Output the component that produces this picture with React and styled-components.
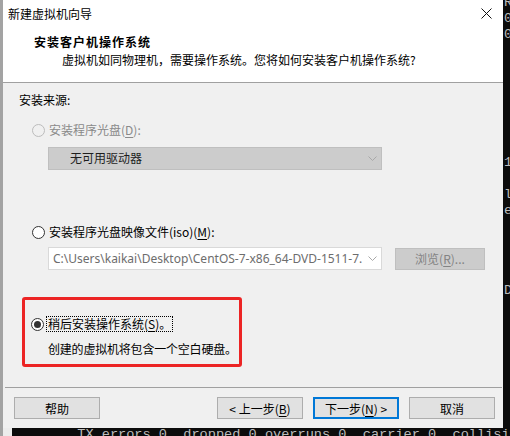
import React from 'react';
import styled, { createGlobalStyle, css } from 'styled-components';

const GlobalStyle = createGlobalStyle`
    html, body {
        margin: 0;
        padding: 0;
        background: #0c0c0c;
        overflow: hidden;
    }
    body {
        font-family: "Noto Sans CJK SC", "Noto Sans", sans-serif;
        font-size: 12px;
        color: #000000;
    }
`;

const Desktop = styled.div`
    position: relative;
    width: 510px;
    height: 436px;
    overflow: hidden;
    background: #0c0c0c;
`;

// strip of the window sitting behind the console
const BackStrip = styled.div`
    position: absolute;
    left: 0;
    top: 0;
    bottom: 0;
    width: 9px;
    background: #ececec;
    border-left: 3px solid #a3a3a3;
`;

const Console = styled.pre`
    position: absolute;
    left: ${p => p.$left}px;
    top: ${p => p.$top}px;
    margin: 0;
    font-family: "Liberation Mono", "DejaVu Sans Mono", monospace;
    font-size: 13.6px;
    line-height: 16px;
    color: #bdbdbd;
    white-space: pre;
`;

const Window = styled.div`
    position: absolute;
    left: 0;
    top: 0;
    width: 500px;
    height: 428px;
    display: flex;
    flex-direction: column;
    background: #f0f0f0;
    border-left: 3px solid #a3a3a3;
`;

const Top = styled.div`
    background: #ffffff;
    border-bottom: 1px solid #a0a0a0;
    height: 82px;
`;

const TitleBar = styled.div`
    height: 26px;
    display: flex;
    align-items: center;
    justify-content: space-between;
    padding: 0 10px 0 5px;
`;

const Title = styled.span`
    font-size: 12px;
    color: #000;
`;

const Close = styled.svg`
    width: 11px;
    height: 11px;
    margin-right: 1px;
`;

const Header = styled.div`
    padding: 7px 0 0 31px;
    line-height: 18px;
`;

const Heading = styled.div`
    font-weight: 700;
    letter-spacing: 1px;
`;

const Sub = styled.div`
    padding-left: 28px;
`;

const Body = styled.div`
    flex: 1;
    padding: 8px 0 0 16px;
    line-height: 18px;
`;

const Row = styled.div`
    display: flex;
    align-items: center;
    height: 18px;
    margin-top: ${p => p.$top || 0}px;
    padding-left: ${p => p.$indent || 0}px;
    color: ${p => (p.$disabled ? '#8a8a8a' : '#000')};
`;

const Radio = styled.span`
    box-sizing: border-box;
    width: 13px;
    height: 13px;
    border-radius: 50%;
    border: 1px solid ${p => (p.$disabled ? '#bcbcbc' : '#333333')};
    background: ${p => (p.$disabled ? '#f0f0f0' : '#ffffff')};
    display: flex;
    align-items: center;
    justify-content: center;
    margin-right: 2px;
    ${p => p.$checked && css`
        &::after {
            content: '';
            width: 7px;
            height: 7px;
            border-radius: 50%;
            background: #333333;
        }
    `}
`;

const Label = styled.span`
    padding: 0 1px;
    border: 1px dotted ${p => (p.$focus ? '#000' : 'transparent')};
    line-height: 14px;
`;

const Key = styled.u`
    text-underline-offset: 2px;
`;

const Field = styled.div`
    box-sizing: border-box;
    width: 334px;
    height: 23px;
    margin-left: 29px;
    display: flex;
    align-items: center;
    border: 1px solid ${p => (p.$filled ? '#d9d9d9' : '#bfbfbf')};
    background: ${p => (p.$filled ? '#ffffff' : '#cccccc')};
    color: ${p => (p.$filled ? '#6d6d6d' : '#1e1e1e')};
    padding-left: ${p => (p.$filled ? 4 : 21)}px;
    padding-right: 4px;
`;

const FieldText = styled.span`
    flex: 1;
    overflow: hidden;
    white-space: nowrap;
    font-family: "Noto Sans", "Noto Sans CJK SC", sans-serif;
    font-size: 12px;
`;

const Chevron = styled.svg`
    width: 9px;
    height: 5px;
    margin-left: 6px;
    flex: none;
`;

const PathRow = styled.div`
    display: flex;
    align-items: center;
    margin-top: 6px;
`;

const Browse = styled.div`
    box-sizing: border-box;
    width: 90px;
    height: 22px;
    margin-left: 13px;
    display: flex;
    align-items: center;
    justify-content: center;
    background: #cccccc;
    border: 1px solid #bfbfbf;
    color: #838383;
`;

const Callout = styled.div`
    box-sizing: border-box;
    width: 220px;
    height: 70px;
    margin: 27px 0 0 3px;
    padding: 15px 0 0 6px;
    border: 3px solid #ec2424;
    border-radius: 3px;
`;

const Note = styled.div`
    margin: 7px 0 0 17px;
    white-space: nowrap;
    letter-spacing: -0.2px;
`;

const Footer = styled.div`
    box-sizing: border-box;
    height: 41px;
    margin: 0 1px 0 2px;
    border-top: 1px solid #a0a0a0;
    display: flex;
    align-items: flex-start;
    padding: 9px 7px 0 9px;
    gap: 10px;
`;

const Button = styled.div`
    box-sizing: border-box;
    width: 86px;
    height: 22px;
    display: flex;
    align-items: center;
    justify-content: center;
    background: #e1e1e1;
    border: ${p => (p.$primary ? '2px solid #0078d7' : '1px solid #adadad')};
    color: #000;
    margin-left: ${p => p.$push ? 'auto' : '0'};
`;

// the console output peeking out to the right of the dialog
const edgeLines = [
    'R', '0', '0', '', '', '', '', '', '', '',
    '15', '', 'l', 'e', '', '', '', '', 'D',
];

const ChevronIcon = ({ color }) => (
    <Chevron viewBox="0 0 9 5">
        <path d="M0.5 0.5 L4.5 4.5 L8.5 0.5" fill="none" stroke={color} strokeWidth="1" />
    </Chevron>
);

export default function App() {
    return (
        <Desktop>
            <GlobalStyle />
            <BackStrip />
            <Console $left={504} $top={-5}>{edgeLines.join('\n')}</Console>
            <Console $left={12} $top={427}>{'        TX errors 0  dropped 0 overruns 0  carrier 0  collisions 0'}</Console>

            <Window>
                <Top>
                    <TitleBar>
                        <Title>新建虚拟机向导</Title>
                        <Close viewBox="0 0 11 11">
                            <path d="M0.5 0.5 L10.5 10.5 M10.5 0.5 L0.5 10.5" stroke="#111" strokeWidth="1" />
                        </Close>
                    </TitleBar>
                    <Header>
                        <Heading>安装客户机操作系统</Heading>
                        <Sub>虚拟机如同物理机，需要操作系统。您将如何安装客户机操作系统?</Sub>
                    </Header>
                </Top>

                <Body>
                    <div>安装来源:</div>

                    {/* installer disc */}
                    <Row $top={12} $indent={13} $disabled>
                        <Radio $disabled />
                        <Label>安装程序光盘(<Key>D</Key>):</Label>
                    </Row>
                    <Field style={{ marginTop: 8 }}>
                        <FieldText>无可用驱动器</FieldText>
                        <ChevronIcon color="#a8a8a8" />
                    </Field>

                    {/* iso image */}
                    <Row $top={53} $indent={13}>
                        <Radio />
                        <Label>安装程序光盘映像文件(iso)(<Key>M</Key>):</Label>
                    </Row>
                    <PathRow>
                        <Field $filled>
                            <FieldText>C:\Users\kaikai\Desktop\CentOS-7-x86_64-DVD-1511-7.2.iso</FieldText>
                            <ChevronIcon color="#a8a8a8" />
                        </Field>
                        <Browse>浏览(<Key>R</Key>)...</Browse>
                    </PathRow>

                    {/* install later */}
                    <Callout>
                        <Row>
                            <Radio $checked />
                            <Label $focus>稍后安装操作系统(<Key>S</Key>)。</Label>
                        </Row>
                        <Note>创建的虚拟机将包含一个空白硬盘。</Note>
                    </Callout>
                </Body>

                <Footer>
                    <Button>帮助</Button>
                    <Button $push>&lt; 上一步(<Key>B</Key>)</Button>
                    <Button $primary>下一步(<Key>N</Key>) &gt;</Button>
                    <Button>取消</Button>
                </Footer>
            </Window>
        </Desktop>
    );
}
